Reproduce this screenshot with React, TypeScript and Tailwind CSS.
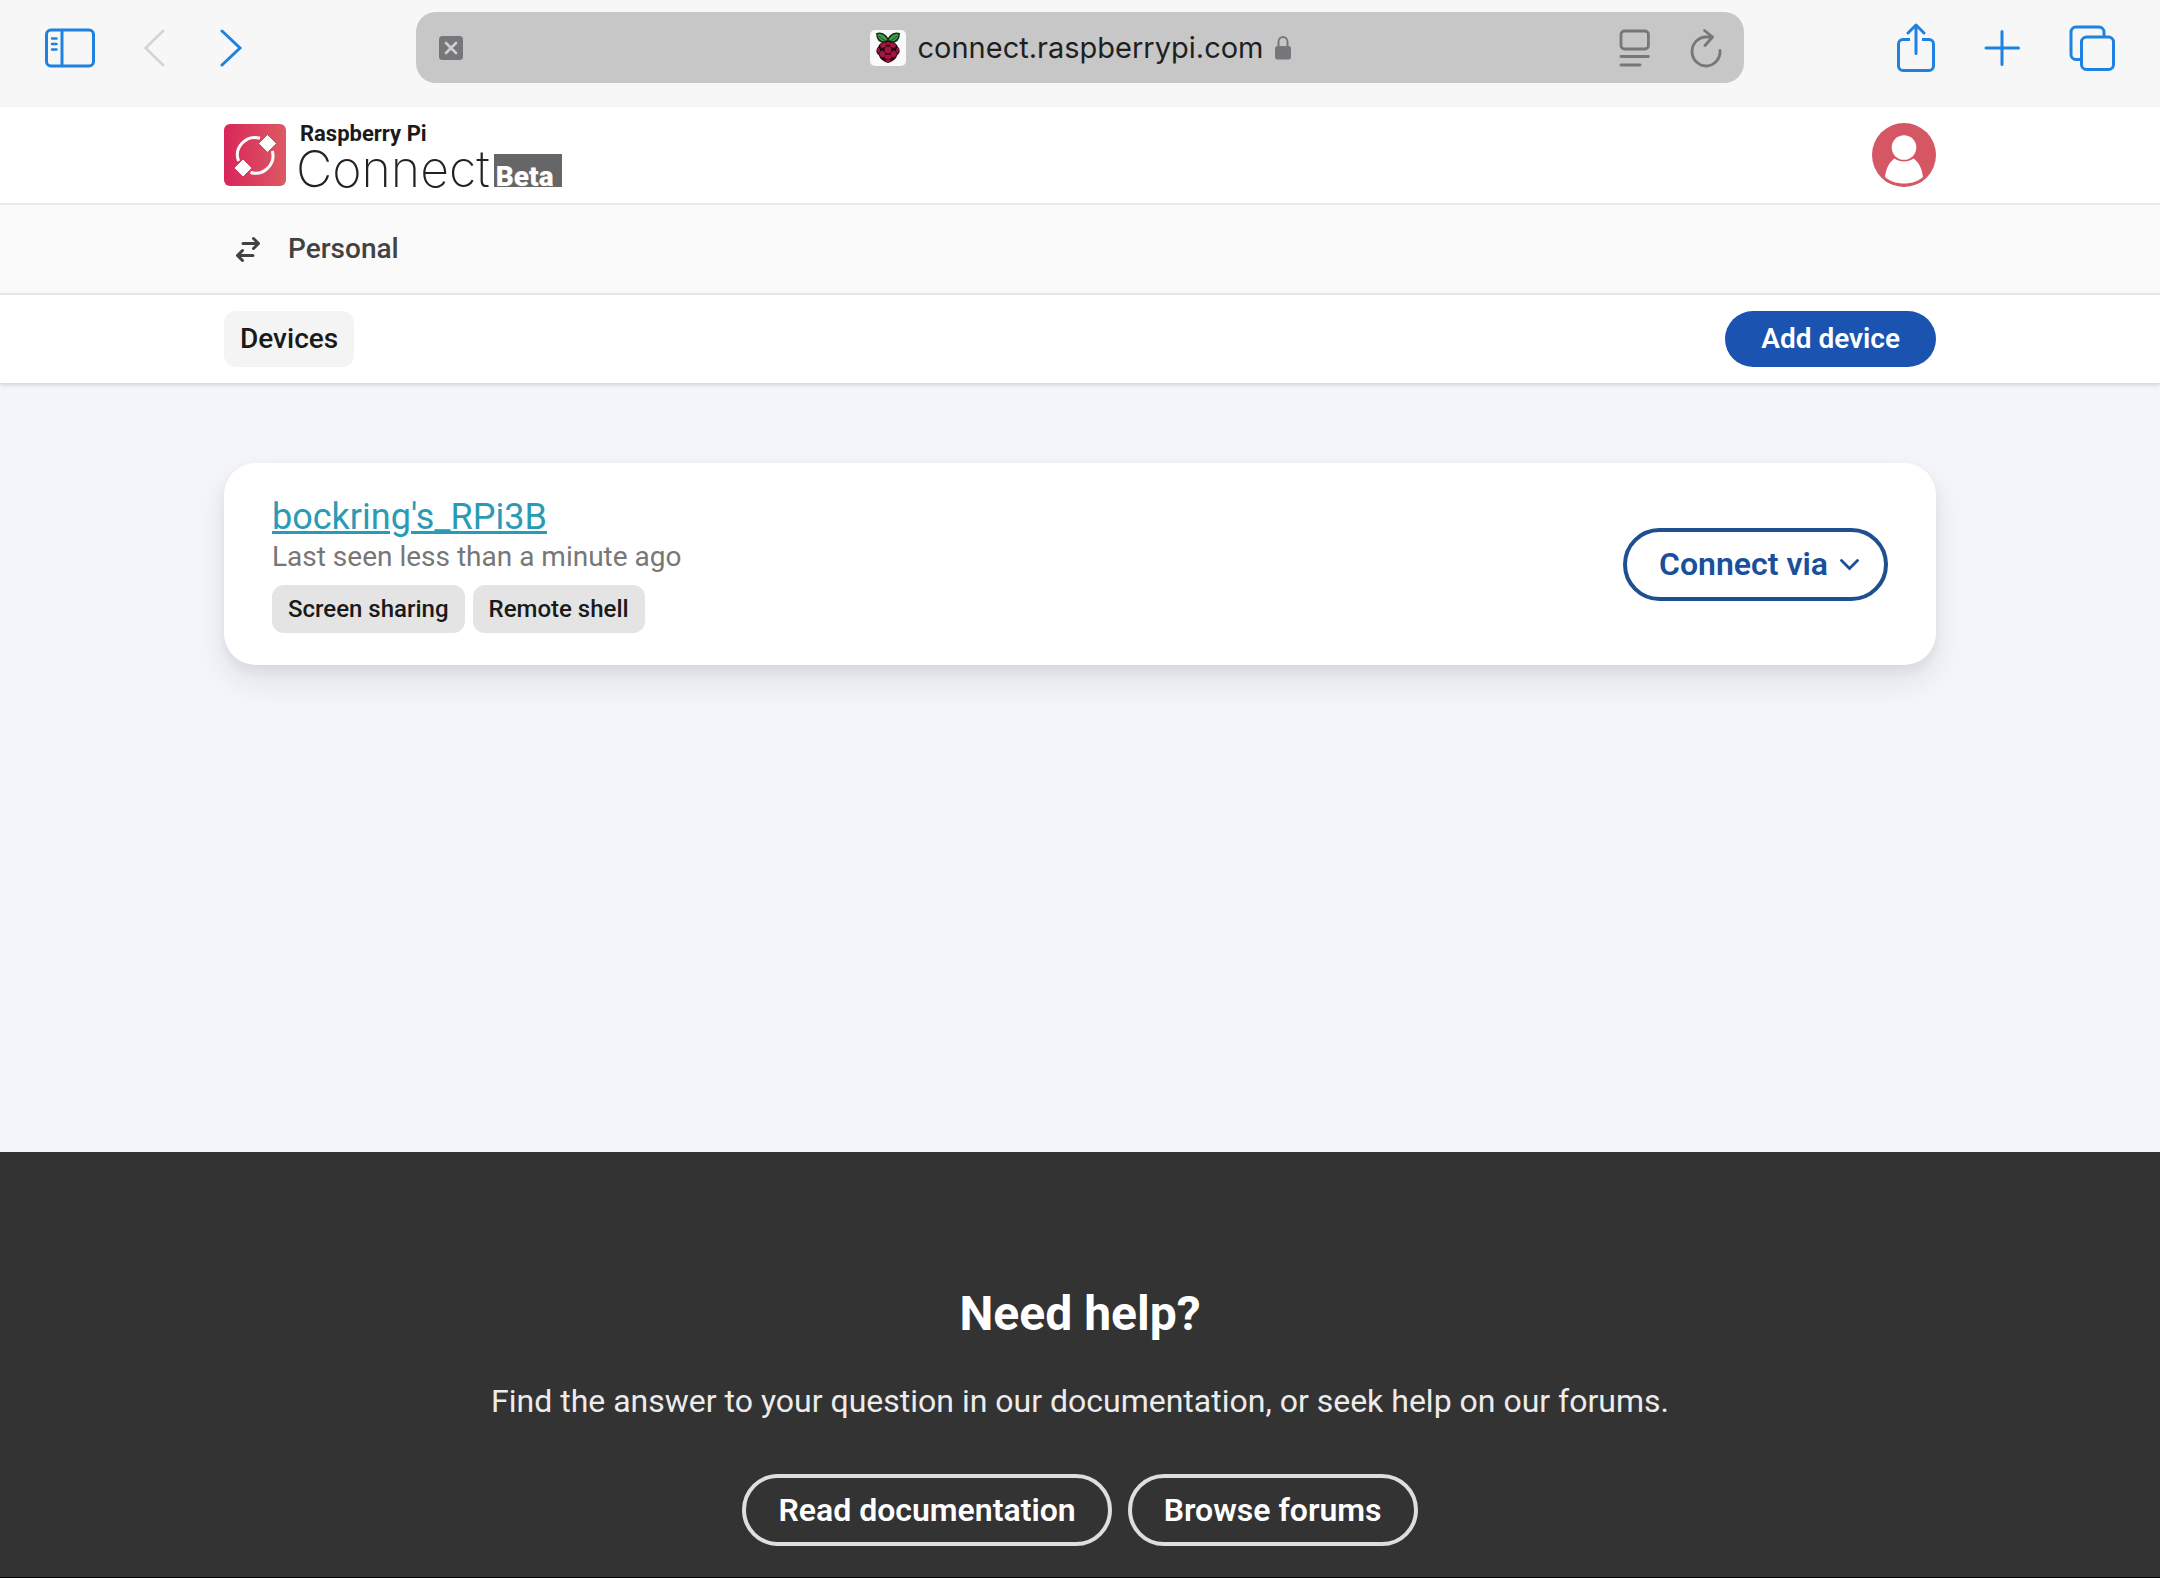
import React from 'react';

const pill = 'flex items-center justify-center rounded-full font-semibold cursor-pointer';

const SidebarIcon = () => (
  <svg width="52" height="40" viewBox="0 0 52 40" fill="none" stroke="currentColor" strokeWidth="3">
    <rect x="2.5" y="2" width="47" height="36" rx="4.5" />
    <path d="M18 2v36" />
    <path d="M8 10.5h4.500M8 16h4.500M8 21.500h4.500" strokeWidth="2.500" strokeLinecap="round" />
  </svg>
);

const ReaderIcon = () => (
  <svg width="32" height="40" viewBox="0 0 32 40" fill="none" stroke="currentColor" strokeWidth="2.8" strokeLinecap="round">
    <rect x="3" y="3" width="27.400" height="18" rx="3.500" />
    <path d="M3 28.500h27.400M3 37h19" />
  </svg>
);

const ReloadIcon = () => (
  <svg width="32" height="40" viewBox="0 0 32 40" fill="none" stroke="currentColor" strokeWidth="2.8" strokeLinecap="round" strokeLinejoin="round">
    <path d="M30 22.500A14 14.500 0 1 1 16 9h6" />
    <path d="M14.500 2.500L22.500 9l-7.500 8.500" />
  </svg>
);

const ShareIcon = () => (
  <svg width="40" height="50" viewBox="0 0 40 50" fill="none" stroke="currentColor" strokeWidth="3" strokeLinecap="round" strokeLinejoin="round">
    <path d="M14 16.500H7a4.500 4.500 0 0 0-4.500 4.500v22A4.500 4.500 0 0 0 7 47.500h26a4.500 4.500 0 0 0 4.500-4.500V21a4.500 4.500 0 0 0-4.500-4.500h-7" strokeLinecap="butt" />
    <path d="M20 30.500V2M12 10l8-8 8 8" />
  </svg>
);

const TabsIcon = () => (
  <svg width="48" height="48" viewBox="0 0 48 48" fill="none" stroke="currentColor" strokeWidth="3">
    <rect x="13.500" y="13" width="32" height="32.500" rx="5" />
    <path d="M13.500 35.500H8a5 5 0 0 1-5-5V8a5 5 0 0 1 5-5h23a5 5 0 0 1 5 5v5" />
  </svg>
);

const RaspberryIcon = () => (
  <svg width="36" height="36" viewBox="0 0 36 36">
    <rect width="36" height="36" rx="5" fill="#fafafa" />
    <g transform="translate(1.300 1.300) scale(.93)">
      <path d="M18 9C15 3 10 1 6 2.500c0 5 3 9 9 9.500zM18 9c3-6 8-8 12-6.500 0 5-3 9-9 9.500z" fill="#3fa04c" stroke="#14301a" strokeWidth="1.600" />
      <path d="M8 5l8 6M28 5l-8 6" stroke="#14301a" strokeWidth=".8" />
      <path d="M18 10.500c5 0 9 2 10.500 6 3 3 2.500 7-.5 9-1 4-5.500 7.500-10 8.500-4.500-1-9-4.500-10-8.500-3-2-3.500-6-.5-9C9 12.500 13 10.500 18 10.500z" fill="#2b0713" />
      <g fill="#a5163f">
        <circle cx="18" cy="20" r="3.700" />
        <ellipse cx="12.800" cy="15" rx="3.400" ry="2.500" transform="rotate(-30 12.800 15)" />
        <ellipse cx="23.200" cy="15" rx="3.400" ry="2.500" transform="rotate(30 23.200 15)" />
        <ellipse cx="18" cy="13" rx="2.600" ry="1.400" />
        <ellipse cx="12" cy="24.500" rx="3" ry="3.600" transform="rotate(-30 12 24.500)" />
        <ellipse cx="24" cy="24.500" rx="3" ry="3.600" transform="rotate(30 24 24.500)" />
        <ellipse cx="7.800" cy="20.500" rx="1.400" ry="3" />
        <ellipse cx="28.200" cy="20.500" rx="1.400" ry="3" />
        <ellipse cx="18" cy="27.500" rx="3.400" ry="2.500" />
        <ellipse cx="18" cy="31.800" rx="3" ry="1.200" />
      </g>
    </g>
  </svg>
);

const LockIcon = () => (
  <svg width="16" height="26" viewBox="0 0 16 26">
    <path d="M3.500 12V7a4.500 5 0 0 1 9 0v5" fill="none" stroke="#77777b" strokeWidth="2" />
    <rect y="11" width="16" height="13.500" rx="2.500" fill="#77777b" />
  </svg>
);

const ConnectLogo = () => (
  <svg width="62" height="62" viewBox="0 0 62 62">
    <defs>
      <linearGradient id="logo-fill" x1="0" y1="0" x2="1" y2="0">
        <stop offset="0" stopColor="#d9265a" />
        <stop offset="1" stopColor="#dc5a63" />
      </linearGradient>
    </defs>
    <rect width="62" height="62" rx="6" fill="url(#logo-fill)" />
    <path d="M14.500 37A17.500 17.500 0 0 1 36 14.300M48.300 27A17.500 17.500 0 0 1 26.500 48.500" fill="none" stroke="#fff" strokeWidth="3" />
    <path d="M43.500 11.500l8 8-8 8-8-8zM19 36l8 8-8 8-8-8z" fill="#fff" stroke="#fff" strokeWidth="1" strokeLinejoin="round" />
  </svg>
);

const AvatarIcon = () => (
  <svg width="64" height="64" viewBox="0 0 64 64">
    <circle cx="32" cy="32" r="32" fill="#d55763" />
    <path d="M22.500 35.500c5.500 4 13.500 4 19 0 5.500 4 8.500 10 9.500 18.500-5 4.500-12 6.500-19 6.500s-14-2-19-6.500c1-8.500 4-14.500 9.500-18.500z" fill="#fff" />
    <circle cx="32" cy="24.500" r="12.300" fill="#fff" />
  </svg>
);

const BrowserBar: React.FC = () => (
  <div className="grid grid-cols-[416px_1fr_416px] items-center h-[107px] pb-3 bg-[#f7f7f7] text-[#1f82e0]">
    <div className="flex items-center gap-12 pl-11">
      <button aria-label="Show sidebar"><SidebarIcon /></button>
      <button aria-label="Back" className="text-[#d4d4d6]">
        <svg width="28" height="40" viewBox="0 0 28 40" fill="none" stroke="currentColor" strokeWidth="2.600" strokeLinecap="round">
          <path d="M19 3L1.500 20 19 37" />
        </svg>
      </button>
      <button aria-label="Forward">
        <svg width="28" height="40" viewBox="0 0 28 40" fill="none" stroke="currentColor" strokeWidth="3" strokeLinecap="round">
          <path d="M2 3l18 17L2 37" />
        </svg>
      </button>
    </div>

    <div className="grid grid-cols-[1fr_auto_1fr] items-center h-[71px] px-[22px] rounded-[20px] bg-[#c7c7c7] text-[#77777b]">
      <button aria-label="Page settings" className="justify-self-start">
        <svg width="26" height="26" viewBox="0 0 26 26">
          <rect x="1" y="1" width="24" height="24" rx="3.500" fill="#77777b" />
          <path d="M8 8l10 10M18 8L8 18" stroke="#d0d0d0" strokeWidth="2.600" strokeLinecap="round" />
        </svg>
      </button>
      <div className="flex items-center gap-3">
        <RaspberryIcon />
        <input
          aria-label="Address"
          readOnly
          value="connect.raspberrypi.com"
          className="w-[345px] bg-transparent text-[29px] leading-[40px] text-[#1f1f1f] font-['Inter',sans-serif] outline-none"
        />
        <LockIcon />
      </div>
      <div className="flex items-center gap-10 justify-self-end">
        <button aria-label="Reader"><ReaderIcon /></button>
        <button aria-label="Reload"><ReloadIcon /></button>
      </div>
    </div>

    <div className="flex items-center justify-end gap-12 pr-11">
      <button aria-label="Share"><ShareIcon /></button>
      <button aria-label="New tab">
        <svg width="36" height="36" viewBox="0 0 36 36" stroke="currentColor" strokeWidth="3" strokeLinecap="round">
          <path d="M18 1.500v33M2 18h32.500" />
        </svg>
      </button>
      <button aria-label="Tabs"><TabsIcon /></button>
    </div>
  </div>
);

const Container: React.FC<{ className?: string; children: React.ReactNode }> = ({ className = '', children }) => (
  <div className={`w-full max-w-[1712px] mx-auto ${className}`}>{children}</div>
);

const Header: React.FC = () => (
  <header className="relative bg-white shadow-[0_2px_4px_rgba(0,0,0,0.14)]">
    <div className="border-b-2 border-[#e9e9e9]">
      <Container className="flex items-center justify-between h-24">
        <a href="#" className="flex items-center gap-2.5">
          <ConnectLogo />
          <span className="flex flex-col pt-1.5">
            <span className="pl-1 text-[22px] leading-[22px] font-bold text-[#1a1a1a]">Raspberry Pi</span>
            <span className="flex items-end gap-1">
              <span className="text-[50px] leading-[48px] font-extralight text-[#222] font-['Inter',sans-serif]">Connect</span>
              <span className="h-[33px] mb-1.5 pl-0.5 pr-2 bg-[#666] text-[28px] leading-[46px] font-black text-white">Beta</span>
            </span>
          </span>
        </a>
        <button aria-label="Account"><AvatarIcon /></button>
      </Container>
    </div>

    <div className="bg-[#fafafa] border-b-2 border-[#e6e6e6]">
      <Container className="flex items-center h-[88px]">
        <button className="flex items-center gap-7 pl-3 text-[28px] leading-[40px] font-medium text-[#424242]">
          <svg width="24" height="26" viewBox="0 0 24 26" fill="none" stroke="currentColor" strokeWidth="3" strokeLinecap="round" strokeLinejoin="round">
            <path d="M7 7.500h15M17.500 2.500l5 5-5 5M17 19.500H2M6.500 14.500l-5 5 5 5" />
          </svg>
          Personal
        </button>
      </Container>
    </div>

    <Container className="flex items-center justify-between h-[88px]">
      <nav>
        <a href="#" className="flex items-center h-14 px-4 rounded-xl bg-[#f4f4f4] text-[28px] font-medium text-[#1a1a1a]">Devices</a>
      </nav>
      <button className={`${pill} h-14 px-9 bg-[#1a53b0] text-[28px] text-white`}>Add device</button>
    </Container>
  </header>
);

const DeviceCard: React.FC = () => (
  <div className="flex items-center justify-between px-12 py-8 rounded-[32px] bg-white shadow-[0_16px_32px_rgba(30,30,40,0.09),0_6px_12px_rgba(30,30,40,0.06)]">
    <div>
      <h2 className="text-[36px] leading-[44px]">
        <a href="#" className="text-[#2a9bb4] underline decoration-[3px]">bockring's_RPi3B</a>
      </h2>
      <p className="text-[28px] leading-[36px] text-[#777]">Last seen less than a minute ago</p>
      <ul className="flex gap-2 mt-2.5 text-[24px] font-medium text-[#1a1a1a]">
        <li className="flex items-center h-12 px-4 rounded-xl bg-[#e4e4e4]">Screen sharing</li>
        <li className="flex items-center h-12 px-4 rounded-xl bg-[#e4e4e4]">Remote shell</li>
      </ul>
    </div>
    <button className={`${pill} gap-3 h-[73px] pl-8 pr-6 border-4 border-[#1d4f91] text-[32px] text-[#1a4f9c]`}>
      Connect via
      <svg width="20" height="14" viewBox="0 0 20 14" fill="none" stroke="currentColor" strokeWidth="2.800" strokeLinecap="round">
        <path d="M1.500 3.500l8 8 8-8" />
      </svg>
    </button>
  </div>
);

const Footer: React.FC = () => (
  <footer className="flex flex-col items-center pt-[132px] pb-[31px] bg-[#333] border-b border-black text-[32px] text-[#ececec]">
    <h2 className="text-[48px] leading-[60px] font-bold text-white">Need help?</h2>
    <p className="mt-8 leading-[50px]">Find the answer to your question in our documentation, or seek help on our forums.</p>
    <div className="flex gap-4 mt-12">
      <a href="#" className={`${pill} h-[72px] px-8 border-4 border-[#dedee0] text-white`}>Read documentation</a>
      <a href="#" className={`${pill} h-[72px] px-8 border-4 border-[#dedee0] text-white`}>Browse forums</a>
    </div>
  </footer>
);

export default function App() {
  return (
    <div className="flex flex-col min-h-screen bg-[#f4f5fa] font-['Roboto',sans-serif]">
      <BrowserBar />
      <Header />
      <main className="grow py-20">
        <Container>
          <DeviceCard />
        </Container>
      </main>
      <Footer />
    </div>
  );
}
